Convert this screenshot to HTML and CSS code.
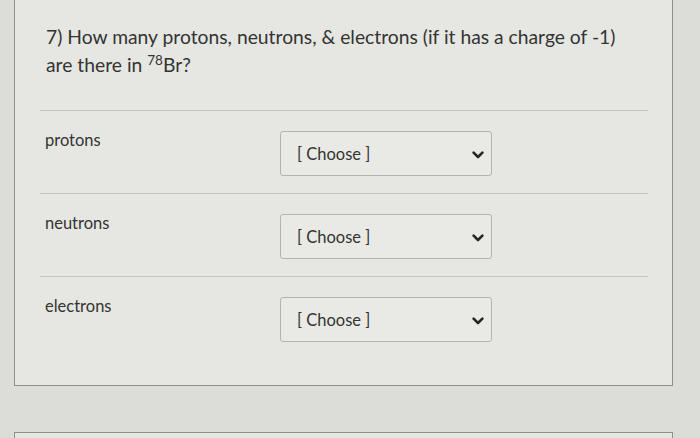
FILE: index.html
```html
<!DOCTYPE html>
<html lang="en">
<head>
<meta charset="utf-8">
<title>Question 7</title>
<link rel="stylesheet" href="styles.css">
</head>
<body>
<div class="page">
  <div class="card">
    <p class="question">7) How many protons, neutrons, &amp; electrons (if it has a charge of -1) are there in <sup>78</sup>Br?</p>
    <div class="answers">
      <div class="row">
        <div class="label">protons</div>
        <div class="select"><span>[ Choose ]</span><svg class="chev" viewBox="0 0 12 8" width="12" height="8"><path d="M1.6 1.6 L6 6 L10.4 1.6" fill="none" stroke="#262626" stroke-width="2.6" stroke-linecap="round" stroke-linejoin="round"/></svg></div>
      </div>
      <div class="row">
        <div class="label">neutrons</div>
        <div class="select"><span>[ Choose ]</span><svg class="chev" viewBox="0 0 12 8" width="12" height="8"><path d="M1.6 1.6 L6 6 L10.4 1.6" fill="none" stroke="#262626" stroke-width="2.6" stroke-linecap="round" stroke-linejoin="round"/></svg></div>
      </div>
      <div class="row">
        <div class="label">electrons</div>
        <div class="select"><span>[ Choose ]</span><svg class="chev" viewBox="0 0 12 8" width="12" height="8"><path d="M1.6 1.6 L6 6 L10.4 1.6" fill="none" stroke="#262626" stroke-width="2.6" stroke-linecap="round" stroke-linejoin="round"/></svg></div>
      </div>
    </div>
  </div>
  <div class="card next"></div>
</div>
</body>
</html>
```

FILE: styles.css
```css
html, body {
  margin: 0;
  padding: 0;
  height: 100%;
  overflow: hidden;
}
body {
  background: #dcddd9;
  font-family: Lato, "Open Sans", sans-serif;
  color: #333432;
}
.page {
  padding: 0 27px 0 14px;
}
.card {
  background: #e6e7e3;
  border: 1px solid #8f908c;
  border-top: none;
  padding: 0 0 26px 0;
}
.question {
  margin: 0;
  padding: 23px 40px 0 31px;
  font-size: 19.3px;
  line-height: 28px;
  height: 87px;
  box-sizing: content-box;
}
.question sup {
  font-size: 13.5px;
  line-height: 0;
  vertical-align: 7px;
}
.answers {
  margin: 0 24px 0 25px;
}
.row {
  display: flex;
  align-items: flex-start;
  border-top: 1px solid #c4c5c1;
  padding: 17px 0 17px 5px;
}
.label {
  width: 235px;
  font-size: 16.5px;
  line-height: 24px;
}
.select {
  margin-top: 3px;
  width: 212px;
  height: 45px;
  box-sizing: border-box;
  border: 1px solid #b3b4b0;
  border-radius: 3px;
  background: #e9eae6;
  display: flex;
  align-items: center;
  justify-content: space-between;
  padding: 0 7px 0 16px;
  font-size: 16.5px;
}
.chev {
  display: block;
  margin-top: 2px;
}
.card.next {
  margin-top: 46px;
  border-top: 1px solid #8f908c;
  height: 40px;
  padding: 0;
}
```
